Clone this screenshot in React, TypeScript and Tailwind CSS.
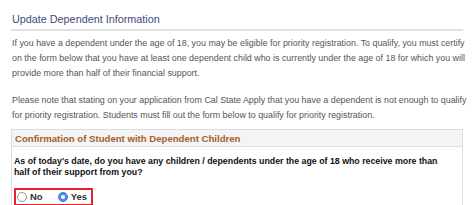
export default function App() {
  return (
    <div className="w-[474px] h-[205px] overflow-hidden bg-white font-['Liberation_Sans',Arial,sans-serif]">
      <div className="pl-[11px] pr-[11px] pt-[12px]">
        {/* Title */}
        <div className="border-b-2 border-[#e2e2e2] pb-[3px] pl-[1px]">
          <h1 className="text-[10.8px] leading-[14px] text-[#3d4a7c]">Update Dependent Information</h1>
        </div>

        {/* Intro paragraphs */}
        <div className="pl-[1px] pt-[5px] -mr-[10px] text-[8.9px] leading-[14.8px] text-[#555]">
          <p>
            <span className="block whitespace-nowrap">
              If you have a dependent under the age of 18, you may be eligible for priority registration. To qualify, you must certify
            </span>
            <span className="block whitespace-nowrap">
              on the form below that you have at least one dependent child who is currently under the age of 18 for which you will
            </span>
            <span className="block whitespace-nowrap">provide more than half of their financial support.</span>
          </p>
          <p className="mt-[13px]">
            <span className="block whitespace-nowrap">
              Please note that stating on your application from Cal State Apply that you have a dependent is not enough to qualify
            </span>
            <span className="block whitespace-nowrap">
              for priority registration. Students must fill out the form below to qualify for priority registration.
            </span>
          </p>
        </div>

        {/* Confirmation box */}
        <div className="mt-[6px] border border-[#dcdcdc] border-b-0 h-[80px]">
          <div className="bg-[#f4f4f4] border-b border-[#e0e0e0] h-[17px] flex items-center pl-[3px] pt-[2px]">
            <span className="text-[9.6px] font-bold text-[#a3602e]">Confirmation of Student with Dependent Children</span>
          </div>
          <div className="pl-[2px] pt-[9px]">
            <p className="text-[8.8px] leading-[11.5px] font-bold text-[#111]">
              <span className="block whitespace-nowrap">
                As of today's date, do you have any children / dependents under the age of 18 who receive more than
              </span>
              <span className="block whitespace-nowrap">half of their support from you?</span>
            </p>
            <div className="mt-[9px] inline-flex items-center gap-[3px] border-2 border-[#e3222c] h-[18px] pl-[1px] pr-[4px]">
              <label className="flex items-center gap-[3px] text-[9.5px] font-bold text-[#333]">
                <span className="w-[10px] h-[10px] rounded-full border border-[#9a9a9a] bg-white" />
                No
              </label>
              <label className="ml-[12px] flex items-center gap-[3px] text-[9.5px] font-bold text-[#333]">
                <span className="w-[10px] h-[10px] rounded-full bg-[#4a8ef0] border border-[#3a7de0] flex items-center justify-center">
                  <span className="w-[4px] h-[4px] rounded-full bg-white" />
                </span>
                Yes
              </label>
            </div>
          </div>
        </div>
      </div>
    </div>
  );
}
